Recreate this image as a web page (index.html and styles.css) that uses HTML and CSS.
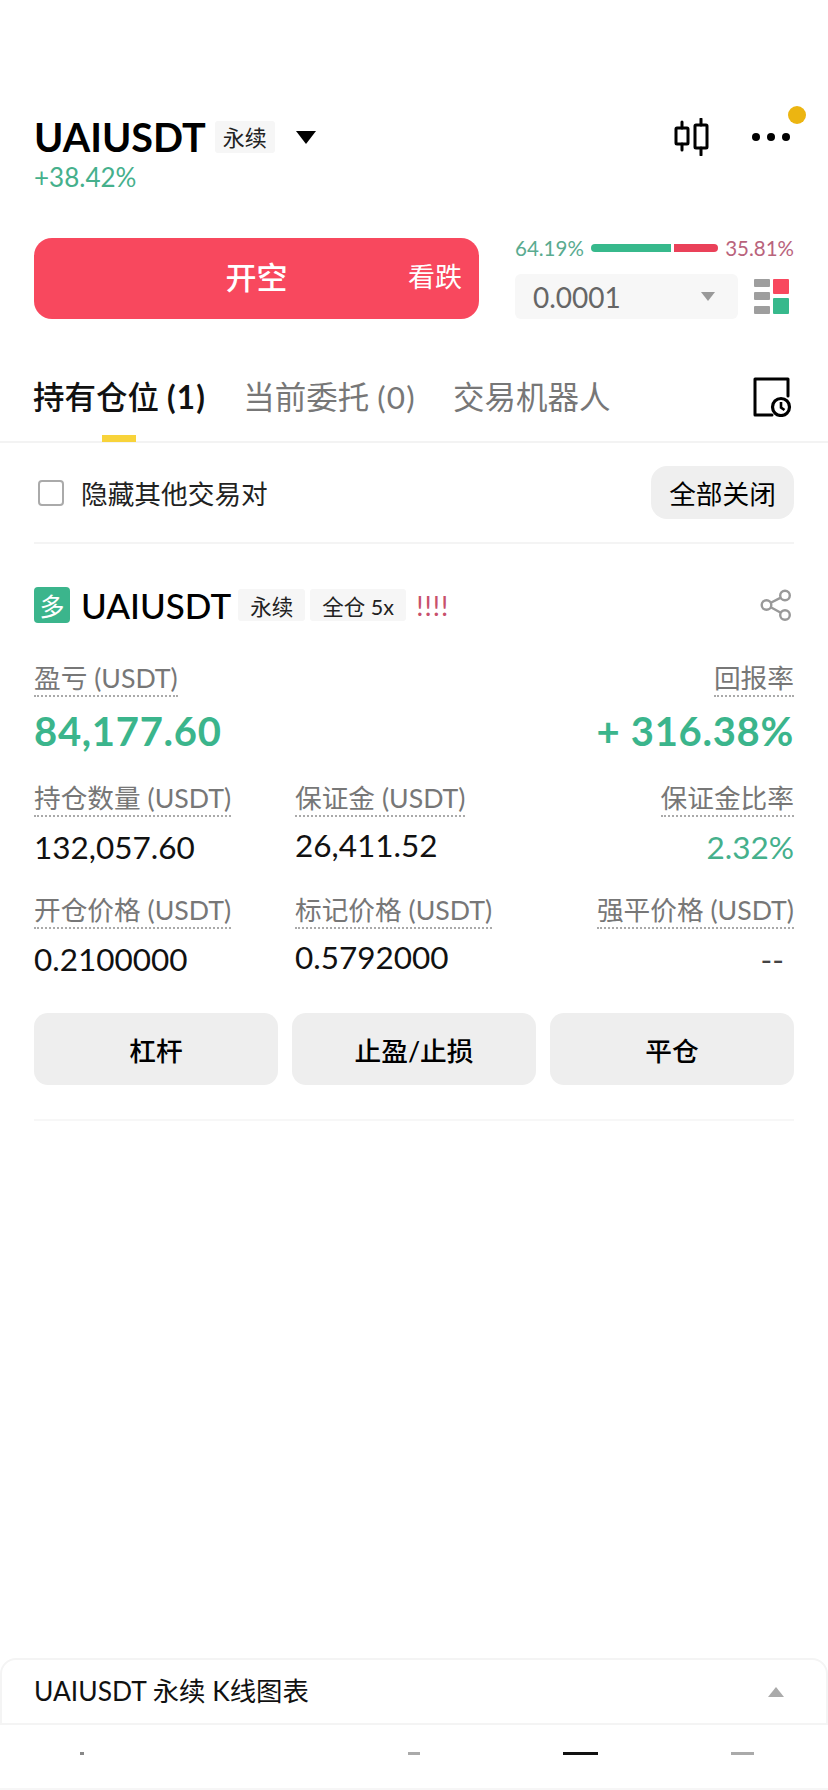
FILE: index.html
```html
<!DOCTYPE html>
<html lang="zh-CN">
<head>
<meta charset="utf-8">
<title>UAIUSDT</title>
<link rel="stylesheet" href="styles.css">
</head>
<body>
<div class="page">
  <header class="head">
    <div class="head-left">
      <div class="title-row">
        <span class="title">UAIUSDT</span>
        <span class="tag tag-head">永续</span>
        <svg class="title-caret" width="20" height="13" viewBox="0 0 20 13"><path d="M0 0H20L10 13Z" fill="#000"/></svg>
      </div>
      <div class="change">+38.42%</div>
    </div>
    <div class="head-right">
      <svg class="candle" width="36" height="38" viewBox="0 0 36 38" fill="none" stroke="#000" stroke-width="3" stroke-linecap="round">
        <rect x="2" y="10" width="12" height="16" rx="1"/>
        <path d="M8 4V10M8 26V32"/>
        <rect x="21" y="7" width="12" height="23" rx="1"/>
        <path d="M27 1V7M27 30V37"/>
      </svg>
      <div class="more"><i></i><i></i><i></i><span class="dot"></span></div>
    </div>
  </header>

  <section class="trade">
    <button class="short"><span class="short-main">开空</span><span class="short-sub">看跌</span></button>
    <div class="trade-side">
      <div class="ratio">
        <span class="pct-up">64.19%</span>
        <span class="bar"><i class="bar-up"></i><i class="bar-down"></i></span>
        <span class="pct-down">35.81%</span>
      </div>
      <div class="depth">
        <div class="select"><span>0.0001</span><svg width="14" height="9" viewBox="0 0 14 9"><path d="M0 0H14L7 9Z" fill="#999"/></svg></div>
        <svg class="book" width="36" height="35" viewBox="0 0 36 35">
          <rect x="0" y="0" width="16" height="8" rx="1" fill="#9e9e9e"/>
          <rect x="0" y="13" width="16" height="8" rx="1" fill="#9e9e9e"/>
          <rect x="0" y="27" width="16" height="8" rx="1" fill="#9e9e9e"/>
          <rect x="19" y="0" width="16" height="15" rx="1" fill="#f8485e"/>
          <rect x="19" y="19" width="16" height="16" rx="1" fill="#37b98c"/>
        </svg>
      </div>
    </div>
  </section>

  <nav class="tabs">
    <span class="tab tab-on">持有仓位 <b class="count">(1)</b><i class="tab-bar"></i></span>
    <span class="tab">当前委托 <span class="count">(0)</span></span>
    <span class="tab">交易机器人</span>
    <svg class="history" width="40" height="40" viewBox="0 0 40 40" fill="none" stroke="#000" stroke-width="3">
      <path d="M20 38H3V2H36V19" stroke-linejoin="round" stroke-linecap="round"/>
      <circle cx="29" cy="30" r="8.5" stroke-width="3.2"/>
      <path d="M29 25V30.5L32.5 33" stroke-width="2.6"/>
    </svg>
  </nav>

  <div class="filter">
    <label class="check"><span class="box"></span><span>隐藏其他交易对</span></label>
    <button class="close-all">全部关闭</button>
  </div>

  <article class="position">
    <div class="pos-head">
      <span class="badge">多</span>
      <span class="pos-name">UAIUSDT</span>
      <span class="tag tag-pos">永续</span>
      <span class="tag tag-cross">全仓 5x</span>
      <span class="warn">!!!!</span>
      <svg class="share" width="32" height="32" viewBox="0 0 32 32" fill="none" stroke="#999" stroke-width="2.4">
        <circle cx="6.5" cy="16" r="4.8"/>
        <circle cx="25" cy="6.5" r="4.8"/>
        <circle cx="25" cy="26" r="4.8"/>
        <path d="M10.8 13.8L20.8 8.6M10.8 18.2L20.8 23.8"/>
      </svg>
    </div>

    <div class="pnl-row">
      <div class="pnl"><span class="lbl">盈亏 (USDT)</span><div class="big">84,177.60</div></div>
      <div class="pnl right"><span class="lbl">回报率</span><div class="big">+ 316.38%</div></div>
    </div>

    <div class="stats">
      <div class="stat"><span class="lbl">持仓数量 (USDT)</span><div class="val">132,057.60</div></div>
      <div class="stat"><span class="lbl">保证金 (USDT)</span><div class="val val-up">26,411.52</div></div>
      <div class="stat right"><span class="lbl">保证金比率</span><div class="val green">2.32%</div></div>
      <div class="stat"><span class="lbl">开仓价格 (USDT)</span><div class="val">0.2100000</div></div>
      <div class="stat"><span class="lbl">标记价格 (USDT)</span><div class="val val-up">0.5792000</div></div>
      <div class="stat right"><span class="lbl">强平价格 (USDT)</span><div class="val dash">--</div></div>
    </div>

    <div class="actions">
      <button>杠杆</button>
      <button>止盈/止损</button>
      <button>平仓</button>
    </div>
  </article>

  <div class="spacer"></div>

  <div class="chart-bar">
    <span class="chart-title">UAIUSDT 永续 K线图表</span>
    <svg width="16" height="10" viewBox="0 0 16 10"><path d="M8 0L16 10H0Z" fill="#aaa"/></svg>
  </div>
  <div class="tabbar">
    <i class="sl sl-a"></i><i class="sl sl-b"></i><i class="sl sl-c"></i><i class="sl sl-d"></i>
  </div>
</div>
</body>
</html>
```
FILE: styles.css
```css
* { box-sizing: border-box; }
html, body { margin: 0; padding: 0; background: #fff; }
body { font-family: "Lato", "Noto Sans CJK SC", sans-serif; color: #000; }
button { font: inherit; border: 0; color: inherit; padding: 0; }
.page { width: 828px; height: 1790px; display: flex; flex-direction: column; overflow: hidden; }

.head { display: flex; justify-content: space-between; align-items: flex-start; padding: 116px 34px 0; height: 238px; }
.title-row { display: flex; align-items: center; height: 42px; }
.title { font-size: 39.6px; font-weight: 700; line-height: 42px; }
.tag { background: #f6f6f6; border-radius: 3px; display: inline-flex; align-items: center; justify-content: center; font-size: 22px; color: #222; }
.tag-head { width: 60px; height: 32px; margin-left: 9px; padding-bottom: 2px; }
.title-caret { margin-left: 21px; }
.change { font-size: 26px; line-height: 30px; color: #45b08c; margin-top: 4px; }
.head-right { display: flex; align-items: center; height: 40px; margin-top: 1px; }
.more { display: flex; gap: 7px; margin-left: 42px; position: relative; margin-right: 4px; }
.more i { width: 8px; height: 8px; border-radius: 50%; background: #000; }
.dot { position: absolute; right: -16px; top: -27px; width: 18px; height: 18px; border-radius: 50%; background: #ecb511; }

.trade { display: flex; padding: 0 34px; height: 81px; }
.short { width: 445px; height: 81px; background: #f8485e; border-radius: 18px; color: #fff; position: relative; display: flex; align-items: center; justify-content: center; padding-bottom: 6px; }
.short-main { font-size: 31px; font-weight: 500; }
.short-sub { position: absolute; right: 17px; font-size: 27px; }
.trade-side { margin-left: 36px; width: 279px; display: flex; flex-direction: column; justify-content: space-between; }
.ratio { display: flex; align-items: center; height: 20px; font-size: 20.5px; line-height: 20px; justify-content: space-between; }
.pct-up { color: #59ab90; }
.pct-down { color: #b9637c; }
.bar { display: flex; width: 127px; height: 8px; gap: 3px; }
.bar i { display: block; height: 8px; }
.bar-up { width: 80px; background: #37b98c; border-radius: 4px 0 0 4px; }
.bar-down { width: 44px; background: #ea4159; border-radius: 0 4px 4px 0; }
.depth { display: flex; align-items: center; justify-content: space-between; height: 45px; }
.select { width: 223px; height: 45px; background: #f7f7f7; border-radius: 6px; display: flex; align-items: center; justify-content: space-between; padding: 0 23px 0 18px; font-size: 28px; color: #666; }
.book { margin-right: 4px; }

.tabs { display: flex; align-items: flex-start; height: 124px; padding: 58px 36px 0 33px; border-bottom: 2px solid #f3f3f3; }
.tab { font-size: 31.5px; line-height: 40px; color: #777; margin-right: 37px; position: relative; white-space: nowrap; }
.tab-on { color: #111; font-weight: 500; }
.count { letter-spacing: 1.2px; }
.tab-bar { position: absolute; left: 69px; top: 58px; width: 34px; height: 7px; background: #f8d33a; }
.history { margin-left: auto; margin-top: 0; }

.filter { margin: 0 34px; height: 101px; display: flex; align-items: center; justify-content: space-between; border-bottom: 2px solid #f4f4f4; padding-left: 4px; }
.check { display: flex; align-items: center; gap: 17px; font-size: 26.7px; color: #222; }
.box { width: 26px; height: 26px; border: 2px solid #aaa; border-radius: 4px; }
.close-all { width: 143px; height: 53px; background: #efefef; border-radius: 16px; font-size: 26.7px; }

.position { margin: 0 34px; height: 577px; border-bottom: 2px solid #f7f7f7; }
.pos-head { display: flex; align-items: center; height: 38px; margin-top: 42px; }
.badge { width: 36px; height: 36px; background: #3bb58c; color: #fff; border-radius: 4px; font-size: 25px; display: flex; align-items: center; justify-content: center; }
.pos-name { font-size: 35px; font-weight: 500; margin-left: 11px; }
.tag-pos { width: 67px; height: 32px; margin-left: 7px; font-size: 21.5px; }
.tag-cross { width: 96px; height: 32px; margin-left: 5px; font-size: 21.5px; }
.warn { color: #c8506c; font-size: 27px; margin-left: 10px; letter-spacing: 1px; }
.share { margin-left: auto; margin-right: 2px; }

.lbl { font-size: 26.7px; line-height: 34px; color: #777; border-bottom: 2px dotted #aaa; display: inline-block; white-space: nowrap; }
.right { text-align: right; }
.pnl-row { display: flex; justify-content: space-between; margin-top: 37px; }
.big { font-size: 40px; font-weight: 700; color: #3bb58c; line-height: 48px; margin-top: 10px; letter-spacing: 0.7px; }
.stats { display: grid; grid-template-columns: 261px 1fr auto; row-gap: 26px; margin-top: 26px; }
.val { font-size: 31.5px; line-height: 40px; color: #111; margin-top: 10px; }
.val-up { margin-top: 8px; }
.val.green { color: #45b08c; }
.val.dash { color: #444; padding-right: 10px; }
.actions { display: flex; gap: 14px; margin-top: 34px; }
.actions button { flex: 1; height: 72px; background: #eee; border-radius: 14px; font-size: 26.7px; font-weight: 500; }

.spacer { flex: 1; }
.chart-bar { height: 67px; border: 2px solid #f4f4f4; border-radius: 16px 16px 0 0; display: flex; align-items: center; justify-content: space-between; padding: 0 42px 0 32px; font-size: 26.4px; color: #111; }
.chart-title { margin-top: -4px; }
.tabbar { height: 65px; border-bottom: 2px solid #f6f6f6; display: flex; padding-top: 27px; align-items: flex-start; }
.sl { display: block; height: 3px; }
.sl-a { width: 4px; margin-left: 80px; background: #888; }
.sl-b { width: 12px; margin-left: 324px; background: #aaa; }
.sl-c { width: 35px; margin-left: 143px; background: #111; }
.sl-d { width: 23px; margin-left: 133px; background: #aaa; }
```
